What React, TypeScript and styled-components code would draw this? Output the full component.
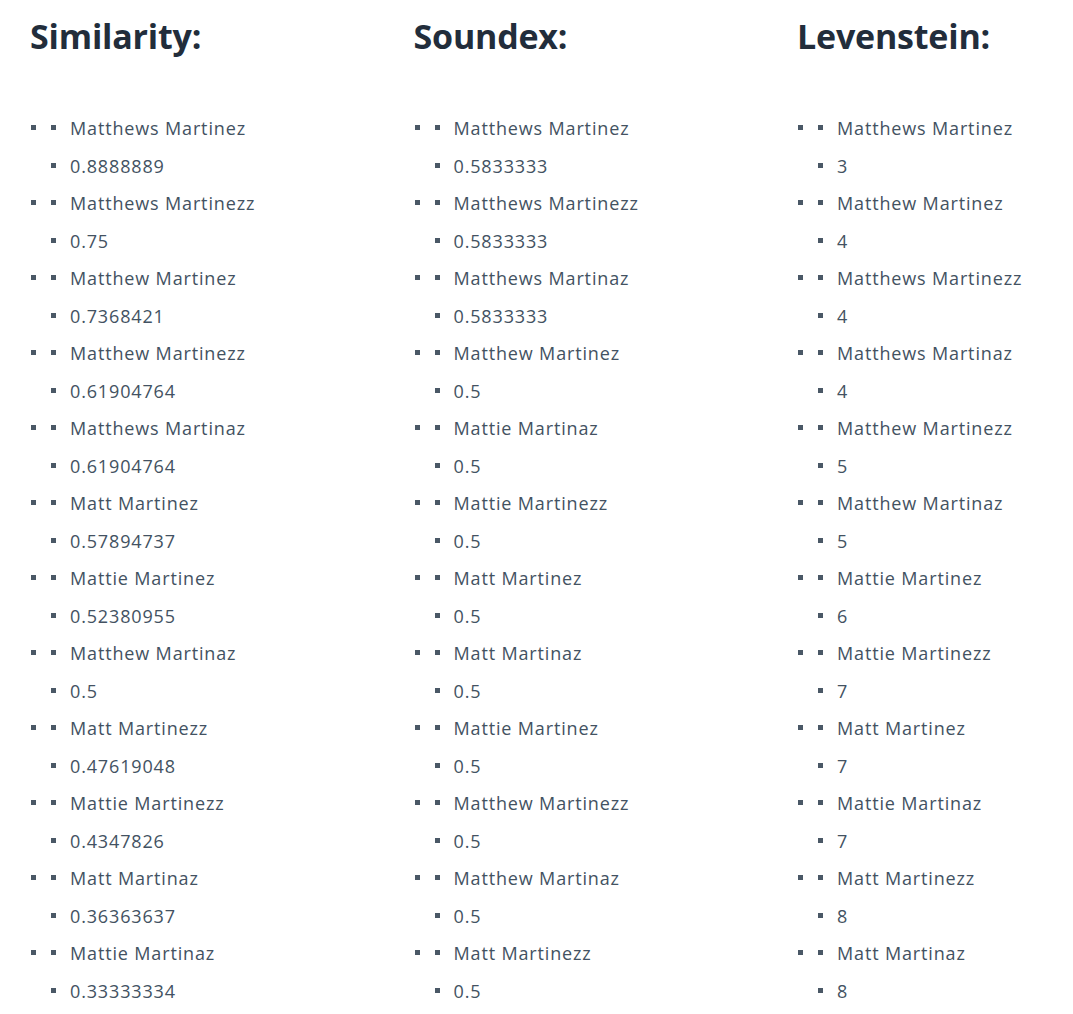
import React from "react";
import styled, { createGlobalStyle } from "styled-components";

const Global = createGlobalStyle`
  html, body { margin: 0; padding: 0; background: #ffffff; overflow: hidden; }
  body { font-family: "Open Sans", "Noto Sans", sans-serif; }
`;

type Row = [string, string];
type Column = { title: string; rows: Row[] };

const columns: Column[] = [
  {
    title: "Similarity:",
    rows: [
      ["Matthews Martinez", "0.8888889"],
      ["Matthews Martinezz", "0.75"],
      ["Matthew Martinez", "0.7368421"],
      ["Matthew Martinezz", "0.61904764"],
      ["Matthews Martinaz", "0.61904764"],
      ["Matt Martinez", "0.57894737"],
      ["Mattie Martinez", "0.52380955"],
      ["Matthew Martinaz", "0.5"],
      ["Matt Martinezz", "0.47619048"],
      ["Mattie Martinezz", "0.4347826"],
      ["Matt Martinaz", "0.36363637"],
      ["Mattie Martinaz", "0.33333334"],
    ],
  },
  {
    title: "Soundex:",
    rows: [
      ["Matthews Martinez", "0.5833333"],
      ["Matthews Martinezz", "0.5833333"],
      ["Matthews Martinaz", "0.5833333"],
      ["Matthew Martinez", "0.5"],
      ["Mattie Martinaz", "0.5"],
      ["Mattie Martinezz", "0.5"],
      ["Matt Martinez", "0.5"],
      ["Matt Martinaz", "0.5"],
      ["Mattie Martinez", "0.5"],
      ["Matthew Martinezz", "0.5"],
      ["Matthew Martinaz", "0.5"],
      ["Matt Martinezz", "0.5"],
    ],
  },
  {
    title: "Levenstein:",
    rows: [
      ["Matthews Martinez", "3"],
      ["Matthew Martinez", "4"],
      ["Matthews Martinezz", "4"],
      ["Matthews Martinaz", "4"],
      ["Matthew Martinezz", "5"],
      ["Matthew Martinaz", "5"],
      ["Mattie Martinez", "6"],
      ["Mattie Martinezz", "7"],
      ["Matt Martinez", "7"],
      ["Mattie Martinaz", "7"],
      ["Matt Martinezz", "8"],
      ["Matt Martinaz", "8"],
    ],
  },
];

const Page = styled.div`
  display: grid;
  grid-template-columns: 383.5px 383.5px 1fr;
  padding: 0 0 0 30px;
`;

const Section = styled.section`
  display: flex;
  flex-direction: column;
`;

const Title = styled.h2`
  margin: 0;
  padding-top: 14px;
  font-family: "Open Sans", "Noto Sans", sans-serif;
  font-weight: 700;
  font-size: 34px;
  line-height: 44px;
  color: #222d3b;
  letter-spacing: -0.2px;
`;

const OuterList = styled.ul`
  list-style: none;
  margin: 51px 0 0 0;
  padding: 0;
`;

const OuterItem = styled.li`
  display: flex;
  align-items: flex-start;
  &::before {
    content: "";
    flex: none;
    width: 5px;
    height: 5px;
    margin: 16px 15px 0 1px;
    background: #4a5866;
  }
`;

const InnerList = styled.ul`
  list-style: none;
  margin: 0;
  padding: 0;
`;

const InnerItem = styled.li<{ $value?: boolean }>`
  display: flex;
  align-items: center;
  box-sizing: border-box;
  height: 37.5px;
  padding-top: ${(p) => (p.$value ? "1px" : "0")};
  font-size: 18px;
  letter-spacing: 0.85px;
  color: #435262;
  white-space: nowrap;
  &::before {
    content: "";
    flex: none;
    width: 5px;
    height: 5px;
    margin-right: 14px;
    background: #4a5866;
  }
`;

export default function App() {
  return (
    <>
      <Global />
      <Page>
        {columns.map((col) => (
          <Section key={col.title}>
            <Title>{col.title}</Title>
            <OuterList>
              {col.rows.map(([name, value], i) => (
                <OuterItem key={i}>
                  <InnerList>
                    <InnerItem>{name}</InnerItem>
                    <InnerItem $value>{value}</InnerItem>
                  </InnerList>
                </OuterItem>
              ))}
            </OuterList>
          </Section>
        ))}
      </Page>
    </>
  );
}
